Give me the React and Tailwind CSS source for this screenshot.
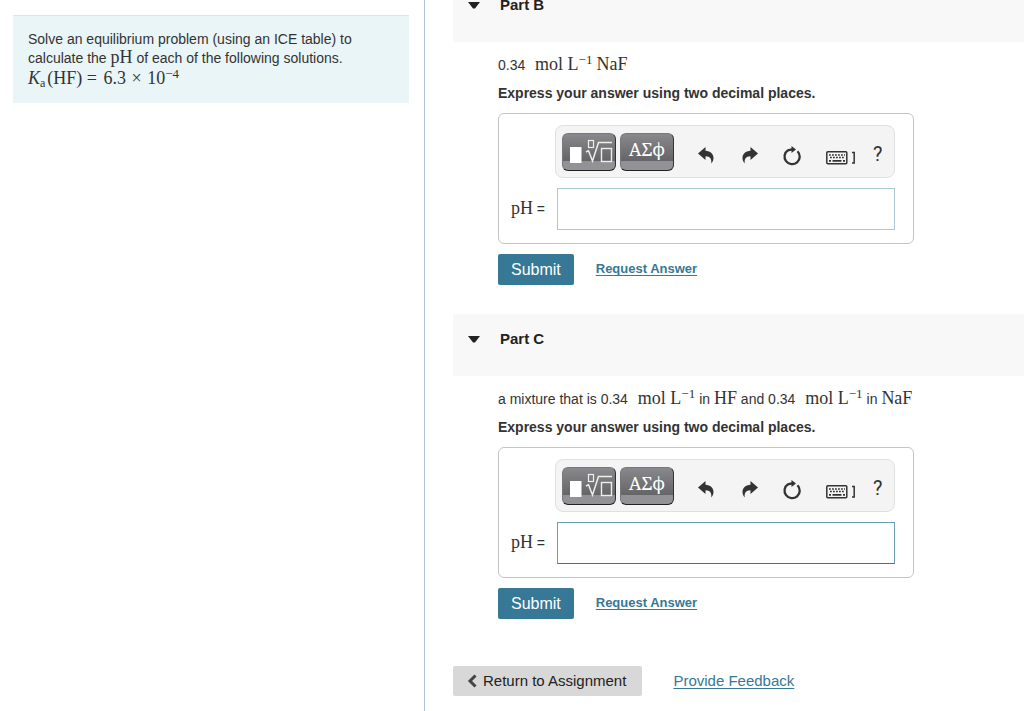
import { useState } from 'react'

const PARTS = [
  { id: 'b', title: 'Part B', inputBorder: 'border-[#a9c9d6]' },
  { id: 'c', title: 'Part C', inputBorder: 'border-[#6d9fb2] border-b-[#367896]' },
]

function Tex({ children, className = '' }) {
  return <span className={`font-["Liberation_Serif",serif] text-[18px] ${className}`}>{children}</span>
}

function Sup({ children }) {
  return <sup className="text-[13px] leading-none">{children}</sup>
}

function MolPerLitre() {
  return <Tex className="ml-1.5 mr-1">mol L<Sup>−1</Sup></Tex>
}

function TemplatesIcon() {
  return (
    <svg viewBox="0 0 52 36" className="w-[52px] h-9 shrink-0" fill="none" stroke="#eee" aria-hidden="true">
      <rect x="7" y="13" width="11.500" height="16" fill="#fff" stroke="none" />
      <rect x="25.500" y="6.500" width="5" height="7" strokeWidth="1.200" />
      <path d="M23 18l2.500-1.300L29.500 27l6-18.500H49" strokeWidth="1.500" />
      <rect x="38.500" y="14.500" width="10" height="13" strokeWidth="1.400" />
    </svg>
  )
}

function UndoIcon({ flip }) {
  return (
    <svg viewBox="0 0 16 17" className={`w-4 h-[17px] ${flip ? '-scale-x-100' : ''}`} fill="#333" aria-hidden="true">
      <path d="M0 6.500 7.500 0v3.800c5 .2 8 3.200 8 7.200 0 2.200-.8 4-2.300 5.500.7-4-.8-7.200-5.700-7.200V13z" />
    </svg>
  )
}

function ResetIcon() {
  return (
    <svg viewBox="0 0 20 20" className="w-5 h-5" aria-hidden="true">
      <path d="M15.500 5.200A7.600 7.600 0 1 1 6 4.200" fill="none" stroke="#333" strokeWidth="2.300" />
      <path d="M9.500 0 14 3.500 9.500 7V4.800L5.500 5.500V3.200l4-1z" fill="#333" />
    </svg>
  )
}

function KeyboardIcon() {
  return (
    <svg viewBox="0 0 31 14" className="w-[31px] h-3.5" fill="none" stroke="#333" aria-hidden="true">
      <rect x=".8" y=".8" width="20" height="12" rx="1" strokeWidth="1.500" />
      <path d="M3 4h16M4 6.500h15" strokeDasharray="1.800 1.200" strokeWidth="1.500" />
      <path d="M3 9.800h2m1.500 0h9m1.500 0h2" strokeWidth="1.700" />
      <path d="M26 1.500h2.200v10.500H26" strokeWidth="1.500" />
    </svg>
  )
}

const TILE = 'h-[38px] w-[54px] shrink-0 rounded-md border border-[#77777c] border-b-[#222] border-r-[#333] bg-linear-to-b from-[#89898d] via-[#656567] via-75% to-[#919196] to-76% text-white flex items-center justify-center'

function Toolbar() {
  return (
    <div className="flex items-center h-[53px] px-1.5 rounded-lg border border-[#e0e0e0] bg-[#f4f4f4] text-[#333]">
      <button type="button" aria-label="Templates" className={TILE}><TemplatesIcon /></button>
      <button type="button" aria-label="Symbols" className={`${TILE} ml-1 pb-1.5 font-["Noto_Serif","DejaVu_Serif",serif] text-lg leading-none`}>ΑΣϕ</button>
      <button type="button" aria-label="Undo" className="ml-6 mt-2"><UndoIcon /></button>
      <button type="button" aria-label="Redo" className="ml-7 mt-2"><UndoIcon flip /></button>
      <button type="button" aria-label="Reset" className="ml-6 mt-2"><ResetIcon /></button>
      <button type="button" aria-label="Keyboard shortcuts" className="ml-6 mt-3"><KeyboardIcon /></button>
      <button type="button" aria-label="Help" className="ml-4 mt-1 font-[Roboto,sans-serif] text-xl leading-none">?</button>
    </div>
  )
}

function Part({ part, children }) {
  const [open, setOpen] = useState(true)
  const [value, setValue] = useState('')
  return (
    <section>
      <h2 className="bg-[#f8f8f8] h-[62px] pb-3">
        <button type="button" aria-expanded={open} onClick={() => setOpen(!open)} className="flex items-center h-full w-full pl-[15px] gap-5 text-[15px] font-bold text-[#222]">
          <svg viewBox="0 0 12 7" className="w-3 h-[7px]" fill="#222" aria-hidden="true"><path d="M0 0h12L7 6.500H5z" /></svg>
          {part.title}
        </button>
      </h2>
      {open && (
        <form onSubmit={e => e.preventDefault()} className="pl-[45px] pt-[11px] pb-[29px]">
          <p className="h-[22px] leading-[22px] whitespace-nowrap">{children}</p>
          <p className="mt-2 leading-5 font-bold">Express your answer using two decimal places.</p>
          <div className="mt-2.5 max-w-[416px] rounded-md border border-[#c4c4c4] pt-[11px] pb-[13px] pr-[18px]">
            <div className="ml-14"><Toolbar /></div>
            <div className="flex items-center mt-2.5">
              <label htmlFor={`ph-${part.id}`} className="w-[58px] pl-3 whitespace-nowrap"><Tex>pH</Tex> =</label>
              <input id={`ph-${part.id}`} value={value} onChange={e => setValue(e.target.value)} className={`flex-1 min-w-0 h-[42px] px-2 border bg-white ${part.inputBorder}`} />
            </div>
          </div>
          <div className="mt-2.5 flex items-center gap-[22px]">
            <button type="submit" className="h-[31px] px-[13px] rounded-xs bg-[#367896] text-white text-base">Submit</button>
            <a href="#answer" className="text-[13px] font-bold text-[#367896] underline underline-offset-2">Request Answer</a>
          </div>
        </form>
      )}
    </section>
  )
}

export default function App() {
  return (
    <div className='flex h-screen overflow-hidden bg-white font-["Liberation_Sans",Arial,sans-serif] text-sm text-[#333]'>
      <aside className="w-[41.5%] shrink-0 border-r border-[#adc3dc] pl-[13px] pr-[15px] pt-[15px]">
        <div className="bg-[#eaf5f7] border-t border-[#e0e4e4] px-[15px] pt-3.5 pb-3.5">
          <p className="leading-[18px]">
            Solve an equilibrium problem (using an ICE table) to calculate the <Tex>pH</Tex> of each of the following solutions.
          </p>
          <p className="h-[22px] leading-[22px]">
            <Tex><i>K</i><sub className="text-xs leading-none mr-0.5">a</sub>(HF) <span className="mr-0.5">=</span> 6.3 <span className="mx-px">×</span> 10<Sup>−4</Sup></Tex>
          </p>
        </div>
      </aside>
      <main className="flex-1 min-w-0 pl-7">
        <div className="-mt-5">
          <Part part={PARTS[0]}>0.34 <MolPerLitre /><Tex>NaF</Tex></Part>
          <Part part={PARTS[1]}>
            a mixture that is 0.34 <MolPerLitre />in <Tex>HF</Tex> and 0.34 <MolPerLitre />in <Tex>NaF</Tex>
          </Part>
          <div className="mt-[18px] flex items-center gap-[31px]">
            <button type="button" className="h-[30px] pl-3.5 pr-4 rounded-xs bg-[#d8d8d8] text-[15px] text-[#222] flex items-center gap-1.5">
              <svg viewBox="0 0 10 14" className="w-2.5 h-3.5" fill="none" stroke="#444" strokeWidth="3" aria-hidden="true"><path d="M8.500 1.500 3 7l5.500 5.500" /></svg>
              Return to Assignment
            </button>
            <a href="#feedback" className="text-[15px] text-[#367896] underline underline-offset-2">Provide Feedback</a>
          </div>
        </div>
      </main>
    </div>
  )
}
